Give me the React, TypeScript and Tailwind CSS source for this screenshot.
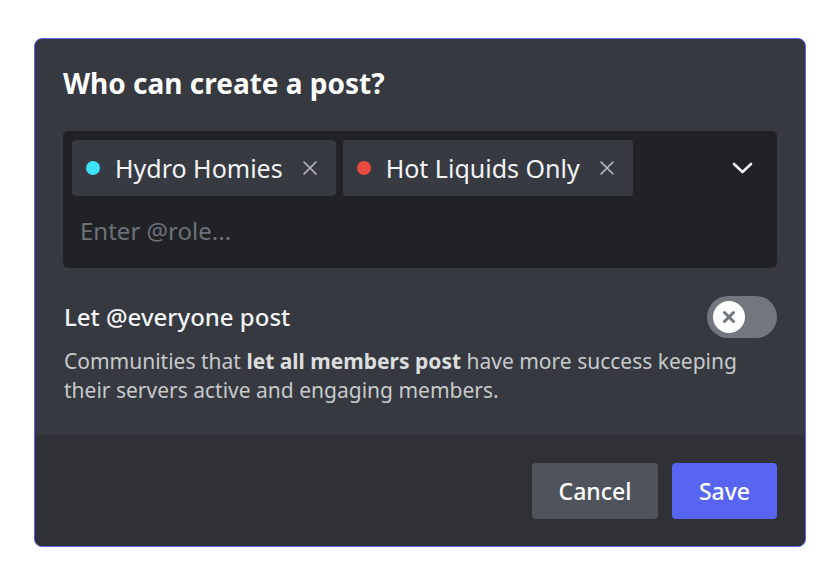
import React from 'react'

const FONT = { fontFamily: '"Noto Sans", "Open Sans", sans-serif' }

function CloseIcon({ className }: { className?: string }) {
  return (
    <svg className={className} viewBox="0 0 16 16" fill="none" stroke="currentColor" strokeWidth={1.6} strokeLinecap="round">
      <path d="M2 2L14 14M14 2L2 14" />
    </svg>
  )
}

function Chip({ color, label }: { color: string; label: string }) {
  return (
    <div className="flex h-[56px] items-center rounded-[4px] bg-[#373a41] pl-[14px] pr-[18px]">
      <span className={`h-[14px] w-[14px] rounded-full ${color}`} />
      <span className="ml-[15px] text-[25px] leading-none text-[#f2f3f5]">{label}</span>
      <CloseIcon className="ml-[19px] h-[16px] w-[16px] text-[#b9bbbe]" />
    </div>
  )
}

export default function App() {
  return (
    <div className="min-h-screen bg-white pl-[34px] pt-[38px]" style={FONT}>
      <div className="flex h-[509px] w-[772px] flex-col overflow-hidden rounded-[8px] border border-[#5865f2] bg-[#36393f]">
        {/* Body */}
        <div className="flex h-[396px] flex-col px-[28px] pt-[28px]">
          <h1 className="text-[28px] font-bold leading-[32px] text-white">Who can create a post?</h1>

          <div className="mt-[32px] flex h-[137px] flex-col rounded-[5px] bg-[#202225] pl-[9px] pt-[9px]">
            <div className="flex items-start">
              <div className="flex flex-1 flex-wrap gap-[7px]">
                <Chip color="bg-[#3ee2f8]" label="Hydro Homies" />
                <Chip color="bg-[#ec4b3f]" label="Hot Liquids Only" />
              </div>
              <div className="mr-[24px] flex h-[56px] items-center">
                <svg className="h-[12px] w-[21px] text-[#f2f3f5]" viewBox="0 0 21 12" fill="none" stroke="currentColor" strokeWidth={2.6} strokeLinecap="round" strokeLinejoin="round">
                  <path d="M2 2L10.5 10L19 2" />
                </svg>
              </div>
            </div>
            <div className="flex h-[72px] items-center pl-[8px] pb-[2px]">
              <span className="text-[24px] leading-none text-[#6c7078]">Enter @role...</span>
            </div>
          </div>

          <div className="mt-[28px] flex items-center justify-between pl-[1px]">
            <span className="text-[24px] font-medium leading-none text-[#f2f3f5]">Let @everyone post</span>
            <div className="flex h-[42px] w-[70px] items-center rounded-full bg-[#72767d] pl-[6px]">
              <div className="flex h-[32px] w-[32px] items-center justify-center rounded-full bg-white">
                <svg className="h-[14px] w-[14px] text-[#72767d]" viewBox="0 0 14 14" fill="none" stroke="currentColor" strokeWidth={3} strokeLinecap="round">
                  <path d="M2.5 2.5L11.5 11.5M11.5 2.5L2.5 11.5" />
                </svg>
              </div>
            </div>
          </div>

          <p className="mt-[9px] max-w-[690px] pl-[1px] text-[21px] leading-[29px] text-[#c7c9cc]">
            Communities that <span className="font-bold text-[#dcddde]">let all members post</span> have more success keeping their servers active and engaging members.
          </p>
        </div>

        {/* Footer */}
        <div className="flex flex-1 items-start justify-end gap-[14px] bg-[#2f3136] pr-[28px] pt-[28px]">
          <button className="flex h-[56px] w-[126px] items-center justify-center rounded-[4px] bg-[#4f545c] text-[23px] font-medium text-white">
            Cancel
          </button>
          <button className="flex h-[56px] w-[105px] items-center justify-center rounded-[4px] bg-[#5865f2] text-[23px] font-medium text-white">
            Save
          </button>
        </div>
      </div>
    </div>
  )
}
